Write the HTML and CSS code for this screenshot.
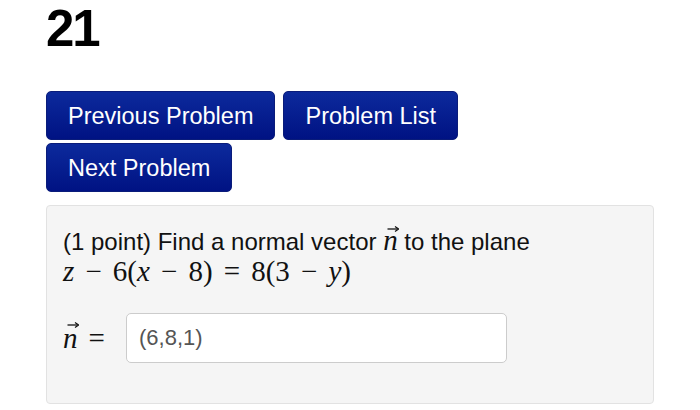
FILE: index.html
```html
<!DOCTYPE html>
<html>
<head>
<meta charset="utf-8">
<link rel="stylesheet" href="styles.css">
</head>
<body>
<div class="page">
  <h1 class="num">21</h1>
  <div class="nav">
    <div class="row">
      <a class="btn">Previous Problem</a>
      <a class="btn">Problem List</a>
    </div>
    <div class="row">
      <a class="btn">Next Problem</a>
    </div>
  </div>
  <div class="card">
    <div class="q">(1 point) Find a normal vector <span class="vec"><i class="m">n</i><svg class="arr" viewBox="0 0 12 6" width="12" height="6"><path d="M0.5 3H10.5" stroke="#111" stroke-width="1.3"/><path d="M8 0.6L11.5 3L8 5.4" fill="none" stroke="#111" stroke-width="1.2"/></svg></span> to the plane</div>
    <div class="eq"><i class="m">z</i><span class="op">&#8722;</span>6(<i class="m">x</i><span class="op">&#8722;</span>8)<span class="op">=</span>8(3<span class="op">&#8722;</span><i class="m">y</i>)</div>
    <div class="ans">
      <span class="lbl"><span class="vec"><i class="m">n</i><svg class="arr" viewBox="0 0 12 6" width="12" height="6"><path d="M0.5 3H10.5" stroke="#111" stroke-width="1.3"/><path d="M8 0.6L11.5 3L8 5.4" fill="none" stroke="#111" stroke-width="1.2"/></svg></span><span class="op">=</span></span>
      <div class="inp">(6,8,1)</div>
    </div>
  </div>
</div>
</body>
</html>
```
FILE: styles.css
```css
html, body { margin: 0; padding: 0; background: #fff; }
body { font-family: "Liberation Sans", Arial, sans-serif; color: #111; }
.page { padding: 6px 0 0 46px; width: 608px; }
.num { margin: 0; font-size: 51px; font-weight: bold; line-height: 46px; letter-spacing: -2px; color: #000; }
.nav { margin-top: 39px; display: flex; flex-direction: column; gap: 3px; }
.row { display: flex; gap: 8px; }
.btn {
  display: inline-block; box-sizing: border-box; height: 49px; line-height: 48px;
  padding: 0 21px; font-size: 23.5px; color: #fff; border-radius: 5px;
  background: linear-gradient(#0c2a9c, #001283);
  border: 1px solid #0a1c7a;
}
.card {
  margin-top: 13px; box-sizing: border-box; height: 199px;
  background: #f5f5f5; border: 1px solid #e2e2e2; border-radius: 4px;
  padding: 20px 16px;
}
.q { font-size: 24px; line-height: 28px; color: #111; }
.m { font-family: "Liberation Serif", "Times New Roman", serif; font-style: italic; font-size: 29px; }
.eq { font-family: "Liberation Serif", "Times New Roman", serif; font-size: 29px; line-height: 30px; }
.op { display: inline-block; width: 0.778em; text-align: center; font-family: "Liberation Serif", serif; font-style: normal; font-size: 29px; margin: 0 8px; }
.vec { position: relative; display: inline-block; }
.arr { position: absolute; left: 4px; top: 0px; }
.ans { display: flex; align-items: center; margin-top: 27px; }
.lbl { font-family: "Liberation Serif", serif; width: 63px; display: inline-block; white-space: nowrap; }
.lbl .op { margin-left: 8px; }
.inp {
  box-sizing: border-box; width: 381px; height: 50px; background: #fff;
  border: 1px solid #ccc; border-radius: 5px; padding: 0 12px;
  font-size: 22px; line-height: 48px; color: #555;
}
```
